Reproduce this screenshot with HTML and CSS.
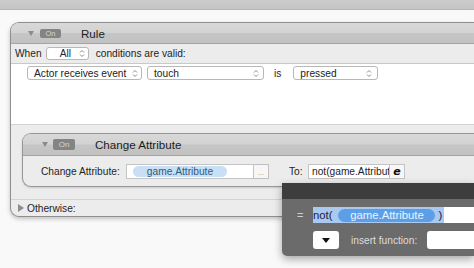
FILE: index.html
```html
<!DOCTYPE html>
<html>
<head>
<meta charset="utf-8">
<link rel="stylesheet" href="styles.css">
</head>
<body>
<div class="toolbar"></div>
<div class="canvas">
  <div class="rule">
    <div class="hdr rule-hdr">
      <span class="tri-down"></span>
      <span class="onpill">On</span>
      <span class="title">Rule</span>
    </div>
    <div class="when">
      <span class="when-lbl">When</span>
      <span class="popup all"><span class="ptext">All</span><svg class="stepper" width="6" height="9" viewBox="0 0 6 9"><path d="M1 3.5L3 1.5L5 3.5M1 5.5L3 7.5L5 5.5" fill="none" stroke="#8a8a8a" stroke-width="1"/></svg></span>
      <span class="cond-lbl">conditions are valid:</span>
    </div>
    <div class="conds">
      <div class="cond">
        <span class="popup actor"><span class="ptext">Actor receives event</span><svg class="stepper" width="6" height="9" viewBox="0 0 6 9"><path d="M1 3.5L3 1.5L5 3.5M1 5.5L3 7.5L5 5.5" fill="none" stroke="#8a8a8a" stroke-width="1"/></svg></span>
        <span class="popup touch"><span class="ptext">touch</span><svg class="stepper" width="6" height="9" viewBox="0 0 6 9"><path d="M1 3.5L3 1.5L5 3.5M1 5.5L3 7.5L5 5.5" fill="none" stroke="#8a8a8a" stroke-width="1"/></svg></span>
        <span class="is">is</span>
        <span class="popup pressed"><span class="ptext">pressed</span><svg class="stepper" width="6" height="9" viewBox="0 0 6 9"><path d="M1 3.5L3 1.5L5 3.5M1 5.5L3 7.5L5 5.5" fill="none" stroke="#8a8a8a" stroke-width="1"/></svg></span>
      </div>
    </div>
    <div class="actions">
      <div class="behavior">
        <div class="hdr beh-hdr">
          <span class="tri-down"></span>
          <span class="onpill big">On</span>
          <span class="title">Change Attribute</span>
        </div>
        <div class="beh-body">
          <span class="lbl">Change Attribute:</span>
          <span class="attrfield"><span class="attrpill">game.Attribute</span></span>
          <span class="dots">...</span>
          <span class="to">To:</span>
          <span class="exprfield">not(game.Attribut</span>
          <span class="ebtn">e</span>
        </div>
      </div>
    </div>
    <div class="otherwise">
      <span class="tri-right"></span>
      <span class="oth-lbl">Otherwise:</span>
    </div>
  </div>
</div>
<div class="editor">
  <div class="ed-top"></div>
  <div class="ed-body">
    <div class="ed-row">
      <span class="eq">=</span>
      <span class="ed-field"><span class="sel"><span class="fn">not(</span><span class="ed-pill">game.Attribute</span><span class="fn close">)</span></span></span>
    </div>
    <div class="ed-row second">
      <span class="ddbtn"><svg width="8" height="5" viewBox="0 0 8 5"><path d="M0 0H8L4 5Z" fill="#111"/></svg></span>
      <span class="ins">insert function:</span>
      <span class="ed-input"></span>
    </div>
  </div>
</div>
</body>
</html>
```

FILE: styles.css
```css
html, body {
  margin: 0;
  padding: 0;
}
body {
  width: 474px;
  height: 268px;
  overflow: hidden;
  position: relative;
  background: #f9f9f9;
  font-family: "Liberation Sans", Arial, sans-serif;
  font-size: 10.2px;
  color: #1e1e1e;
}
.toolbar {
  height: 9px;
  background: linear-gradient(#cccccc, #c5c5c5);
  border-bottom: 1px solid #b6b6b6;
}
.canvas {
  padding: 12px 0 0 10px;
}
.rule {
  width: 463px;
  border: 1px solid #8f8f8f;
  border-right: none;
  border-radius: 9px 0 0 9px;
  background: #ececec;
  box-shadow: 0 2px 4px rgba(0, 0, 0, 0.22);
  overflow: hidden;
}
.hdr {
  display: flex;
  align-items: center;
  background: linear-gradient(#d8d8d8 0%, #d3d3d3 48%, #c6c6c6 52%, #c1c1c1 100%);
  border-bottom: 1px solid #a4a4a4;
}
.rule-hdr {
  height: 20px;
  padding-left: 17px;
}
.tri-down {
  width: 0;
  height: 0;
  border-left: 3px solid transparent;
  border-right: 3px solid transparent;
  border-top: 5px solid #8b8b8b;
}
.onpill {
  margin-left: 6px;
  width: 21px;
  height: 9px;
  border-radius: 2px;
  background: #848484;
  color: #d4d4d4;
  font-size: 7.5px;
  line-height: 9px;
  text-align: center;
}
.onpill.big {
  margin-left: 5px;
  width: 22px;
  height: 11px;
  line-height: 11px;
  font-size: 8px;
}
.title {
  margin-left: 20px;
  font-size: 11.6px;
  color: #1d1d1d;
}
.when {
  height: 19px;
  display: flex;
  align-items: center;
  padding-left: 4px;
  border-bottom: 1px solid #c9c9c9;
}
.popup {
  display: flex;
  align-items: center;
  justify-content: space-between;
  box-sizing: border-box;
  background: #ffffff;
  border: 1px solid #b7b7b7;
  border-radius: 3px;
  color: #222;
}
.stepper {
  flex: none;
}
.all {
  margin-left: 4px;
  width: 43px;
  height: 13px;
  padding: 0 3px 0 13px;
}
.cond-lbl {
  margin-left: 7px;
}
.conds {
  height: 58px;
  background: #ffffff;
  border-bottom: 1px solid #d3d3d3;
  padding: 2px 0 0 16px;
}
.cond {
  display: flex;
  align-items: center;
}
.actor {
  width: 115px;
  height: 14px;
  padding: 0 3px 0 6px;
}
.touch {
  margin-left: 5px;
  width: 117px;
  height: 14px;
  padding: 0 4px 0 6px;
}
.is {
  margin-left: 10px;
}
.pressed {
  margin-left: 12px;
  width: 85px;
  height: 14px;
  padding: 0 5px 0 6px;
}
.actions {
  padding: 8px 0 12px 11px;
}
.behavior {
  border: 1px solid #979797;
  border-right: none;
  border-radius: 9px 0 0 9px;
  background: #ececec;
  box-shadow: 0 1px 2px rgba(0, 0, 0, 0.15);
  overflow: hidden;
}
.beh-hdr {
  height: 21px;
  padding-left: 19px;
}
.beh-body {
  height: 30px;
  display: flex;
  align-items: center;
  padding-left: 18px;
}
.lbl {
  width: 85px;
}
.attrfield {
  box-sizing: border-box;
  width: 128px;
  height: 15px;
  background: #fff;
  border: 1px solid #c4c4c4;
  display: flex;
  align-items: center;
  padding-left: 6px;
}
.attrpill {
  width: 94px;
  height: 11px;
  line-height: 11px;
  border-radius: 6px;
  background: #c8dff5;
  color: #34597f;
  text-align: center;
}
.dots {
  box-sizing: border-box;
  width: 15px;
  height: 15px;
  border: 1px solid #c0c0c0;
  border-left: none;
  background: #f6f6f6;
  color: #8a8a8a;
  font-size: 7px;
  line-height: 15px;
  text-align: center;
}
.to {
  margin-left: 20px;
  width: 19px;
}
.exprfield {
  box-sizing: border-box;
  width: 82px;
  height: 15px;
  line-height: 13px;
  background: #fff;
  border: 1px solid #c4c4c4;
  padding-left: 3px;
  overflow: hidden;
  white-space: nowrap;
}
.ebtn {
  box-sizing: border-box;
  width: 15px;
  height: 15px;
  border: 1px solid #c4c4c4;
  border-left: none;
  background: #f7f7f7;
  font-family: "DejaVu Sans", sans-serif;
  font-weight: bold;
  font-style: italic;
  font-size: 11px;
  line-height: 13px;
  text-align: center;
  color: #111;
}
.otherwise {
  height: 16px;
  border-top: 1px solid #d3d3d3;
  display: flex;
  align-items: center;
  padding-left: 7px;
}
.tri-right {
  width: 0;
  height: 0;
  border-top: 4px solid transparent;
  border-bottom: 4px solid transparent;
  border-left: 6px solid #8d8d8d;
}
.oth-lbl {
  margin-left: 3px;
}
.editor {
  position: absolute;
  left: 282px;
  top: 183px;
  width: 192px;
  border-radius: 0 0 0 5px;
  overflow: hidden;
  box-shadow: 0 3px 9px rgba(0, 0, 0, 0.35);
}
.ed-top {
  height: 16px;
  background: #3d3d3d;
}
.ed-body {
  background: #6b6b6b;
  padding: 8px 0 7px 15px;
}
.ed-row {
  display: flex;
  align-items: center;
  height: 16px;
}
.ed-row.second {
  margin-top: 8px;
  height: 18px;
}
.eq {
  width: 16px;
  color: #d0d0d0;
  font-size: 11px;
}
.ed-field {
  flex: 1;
  height: 16px;
  background: #fff;
  display: flex;
  align-items: center;
}
.sel {
  height: 16px;
  display: flex;
  align-items: center;
  background: #a9c9f1;
  font-size: 11.3px;
  color: #1a2140;
}
.ed-pill {
  margin-left: 6px;
  width: 97px;
  height: 13px;
  line-height: 13px;
  border-radius: 7px;
  background: #5d9fe7;
  color: #eaf3ff;
  text-align: center;
}
.close {
  margin-left: 3px;
  padding-right: 2px;
}
.ddbtn {
  margin-left: 16px;
  width: 26px;
  height: 18px;
  background: #fff;
  border-radius: 3px;
  display: flex;
  align-items: center;
  justify-content: center;
}
.ins {
  margin-left: 12px;
  width: 76px;
  color: #dcdcdc;
}
.ed-input {
  flex: 1;
  height: 18px;
  background: #fff;
  border-radius: 3px 0 0 3px;
}
```
